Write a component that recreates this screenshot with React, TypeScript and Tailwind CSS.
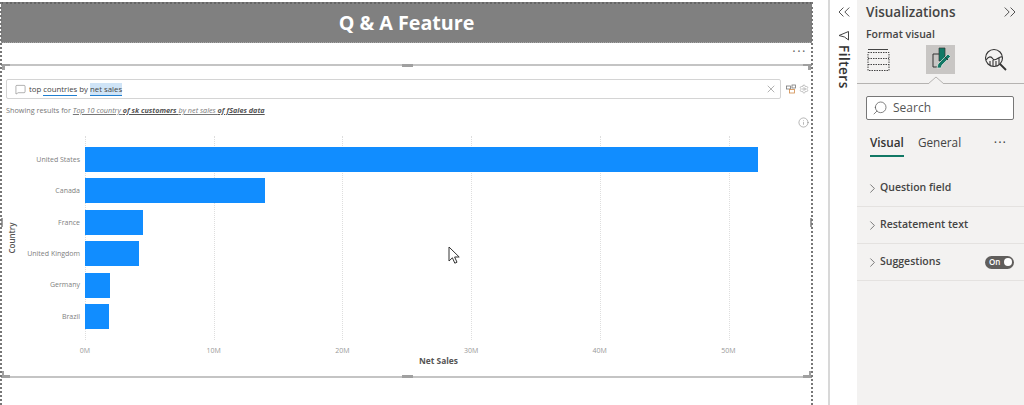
import React from "react";
import { ChevronRight, ChevronsLeft, ChevronsRight, Search, X, MessageSquare, Settings, Info } from "lucide-react";

const bars = [
  { name: "United States", w: 673 },
  { name: "Canada", w: 180 },
  { name: "France", w: 58 },
  { name: "United Kingdom", w: 54 },
  { name: "Germany", w: 25 },
  { name: "Brazil", w: 24 },
];
const ticks = ["0M", "10M", "20M", "30M", "40M", "50M"];

function Handle({ className }: { className: string }) {
  return <div className={"absolute bg-[#a0a0a0] " + className} />;
}

export default function App() {
  return (
    <div className="flex h-[405px] w-[1024px] overflow-hidden bg-white font-['Open_Sans','Noto_Sans',sans-serif]">
      <div className="relative w-[828px] shrink-0 bg-white">
        <div className="mx-[1px] mt-[2px] h-[41px] w-[811px] border-t-2 border-dotted border-[#666] bg-[#808080] border-b border-b-[#a8a8a8]">
          <h1 className="text-center text-[19.7px] leading-[38px] font-bold text-white">Q &amp; A Feature</h1>
        </div>
        <div className="flex h-[21px] w-[812px] items-start justify-end pr-[5px] pt-[4px] text-[13px] leading-[8px] tracking-[1.5px] text-[#666]">···</div>
        <div className="relative mx-[1px] h-[314px] w-[811px] border-y-2 border-[#c4c4c4]">
          <Handle className="left-0 top-[-2px] h-[2px] w-[9px]" />
          <Handle className="left-[1px] top-[-2px] h-[6px] w-[3px]" />
          <Handle className="left-[401px] top-[-2px] h-[3px] w-[11px]" />
          <Handle className="right-0 top-[-2px] h-[2px] w-[9px]" />
          <Handle className="right-[1px] top-[-2px] h-[6px] w-[3px]" />
          <Handle className="left-0 bottom-[-2px] h-[3px] w-[9px]" />
          <Handle className="left-[1px] bottom-[-2px] h-[7px] w-[2px]" />
          <Handle className="left-[401px] bottom-[-2px] h-[3px] w-[11px]" />
          <Handle className="right-0 bottom-[-2px] h-[3px] w-[9px]" />
          <Handle className="right-[1px] bottom-[-2px] h-[7px] w-[2px]" />
          <Handle className="left-0 top-[152px] h-[9px] w-[2px]" />
          <Handle className="right-0 top-[152px] h-[9px] w-[2px]" />
          <div className="flex items-center pl-[5px] pt-[13px]">
            <div className="flex h-[20px] w-[775px] items-center rounded-[2px] border border-[#d4d4d4] pl-[8px] pr-[3px] text-[7.8px] leading-[12px] text-[#444]">
              <MessageSquare size={11} strokeWidth={1} className="mr-[3px] text-[#555]" />
              <span className="border-b border-transparent">top&nbsp;</span>
              <span className="border-b border-[#1f7fd0]">countries</span>
              <span className="border-b border-transparent">&nbsp;by&nbsp;</span>
              <span className="border-b border-[#1f7fd0] bg-[#cfe4f7]">net sales</span>
              <X size={12} strokeWidth={1} className="ml-auto text-[#666]" />
            </div>
            <svg width="10" height="10" viewBox="0 0 10 10" className="ml-[5px] text-[#777]" fill="none" stroke="currentColor" strokeWidth="0.8">
              <rect x="0.5" y="2" width="4" height="3" />
              <rect x="3.5" y="5.5" width="5" height="3.5" stroke="#d08b4a" />
              <rect x="6" y="1" width="3.5" height="3" />
            </svg>
            <Settings size={10} strokeWidth={1} className="ml-[3px] text-[#777]" />
          </div>
          <p className="pl-[5px] pt-[6px] text-[7.25px] leading-[11px] text-[#777]">
            Showing results for <span className="italic underline">Top 10 country </span>
            <span className="font-bold italic text-[#555] underline">of sk customers </span>
            <span className="italic underline">by net sales </span>
            <span className="font-bold italic text-[#555] underline">of fSales data</span>
          </p>
          <div className="flex justify-end pr-[3px] pt-[1px]">
            <Info size={11} strokeWidth={1} className="text-[#666]" />
          </div>
          <div className="relative mt-[8px] flex">
            <div className="flex w-[20px] items-center justify-center">
              <span className="-rotate-90 text-[8px] font-semibold text-[#555]">Country</span>
            </div>
            <div className="relative h-[204px] grow">
              <div className="absolute inset-0 left-[64px]">
                {ticks.map((t, i) => (
                  <div key={t} className="absolute top-0 h-full border-l border-dotted border-[#dedede]" style={{ left: i * 128.7 }} />
                ))}
              </div>
              <div className="relative flex flex-col gap-[6.4px] pt-[11px]">
                {bars.map((b) => (
                  <div key={b.name} className="flex h-[25px] items-center">
                    <span className="w-[59px] shrink-0 whitespace-nowrap pt-[1px] text-right text-[7px] text-[#808080]">{b.name}</span>
                    <div className="ml-[5px] h-full bg-[#118dff]" style={{ width: b.w }} />
                  </div>
                ))}
              </div>
            </div>
          </div>
          <div className="relative flex h-[16px] pl-[84px] pt-[6px] text-[7px] leading-[10px] text-[#999]">
            {ticks.map((t) => (
              <div key={t} className="w-[128.7px] shrink-0 whitespace-nowrap">
                <span className="inline-flex w-0 justify-center">{t}</span>
              </div>
            ))}
          </div>
          <div className="pl-[418px] text-[8.4px] leading-[10px] font-bold text-[#555]">Net Sales</div>
          <svg width="12" height="20" viewBox="0 0 12 20" className="absolute left-[447px] top-[180px]" fill="white" stroke="#333" strokeWidth="1">
            <path d="M1 1v14l3.4-3.2 2.4 5.4 2.2-1-2.4-5.2h4.6z" />
          </svg>
        </div>
        <div className="absolute left-0 top-[2px] h-[403px] border-l-2 border-dotted border-[#777]" />
        <div className="absolute left-[811px] top-[2px] h-[403px] border-l-2 border-dotted border-[#777]" />
      </div>

      <div className="w-[2px] shrink-0 bg-[#d8d8d8]" />

      <div className="flex w-[27px] shrink-0 flex-col items-center bg-white pt-[2px] text-[#444]">
        <ChevronsLeft size={20} strokeWidth={1.1} />
        <svg width="12" height="12" viewBox="0 0 12 12" className="mt-[8px]" fill="none" stroke="#444" strokeWidth="1">
          <path d="M1 5.5 10.5 1.5v8.5L6.5 7 1 5.5Z" />
        </svg>
        <span className="mt-[3px] text-[13.5px] leading-[16px] font-semibold tracking-[0.5px] text-[#333] [writing-mode:vertical-rl]">Filters</span>
      </div>

      <div className="flex grow flex-col bg-[#f3f2f1]">
        <div className="flex h-[22px] items-center justify-between pl-[9px] pr-[4px] pt-[2px]">
          <span className="text-[13.5px] leading-[20px] font-semibold text-[#444]">Visualizations</span>
          <ChevronsRight size={20} strokeWidth={1.1} className="text-[#444]" />
        </div>
        <div className="pl-[9px] pt-[5px] text-[10.5px] leading-[14px] font-semibold text-[#444]">Format visual</div>
        <div className="relative flex h-[43px] items-center border-b border-[#b5b3b1]">
          <svg width="24" height="24" viewBox="0 0 24 24" className="mb-[4px] ml-[10px]" fill="none" stroke="#444" strokeWidth="1">
            <path d="M1 1.5h20" />
            <rect x="1" y="4.5" width="21" height="18" strokeDasharray="1.5 1" />
            <path d="M1 10.5h21M1 16.5h21" strokeDasharray="1.5 1" />
          </svg>
          <div className="mb-[6px] ml-[35px] flex h-[29px] w-[29px] items-center justify-center bg-[#c8c6c4]">
            <svg width="22" height="24" viewBox="0 0 22 24" fill="none">
              <path d="M9 1h6v13H9z" fill="#117865" stroke="#333" strokeWidth="0.7" />
              <path d="M9 7H3v13h4" stroke="#333" />
              <path d="M7 21 8 17 18 7l2.5 2.5L12 18l-1 3z" fill="#117865" stroke="#e8e6e4" strokeWidth="0.7" />
              <path d="m15 10 3 3" stroke="#333" />
            </svg>
          </div>
          <svg width="24" height="24" viewBox="0 0 24 24" className="mb-[4px] ml-[29px]" fill="none" stroke="#333" strokeWidth="1.1">
            <circle cx="10" cy="10" r="8.5" />
            <path d="M2 12c3-4 5-4 7-1s6-3 9-2M6 17v-4M9 18v-6M12 18v-5M15 16v-6" />
            <path d="m16 16 6 6" strokeWidth="1.8" />
          </svg>
          <svg width="18" height="8" viewBox="0 0 18 8" className="absolute bottom-[-1px] left-[70px]">
            <path d="M1 8 9 1l8 7" fill="#f3f2f1" stroke="#b5b3b1" />
          </svg>
        </div>
        <div className="ml-[9px] mr-[10px] mt-[12px] flex h-[24px] items-center rounded-[2px] border border-[#777] bg-white pl-[5px] text-[12px] text-[#555]">
          <Search size={16} strokeWidth={1.1} className="-scale-x-100" />
          <span className="ml-[5px]">Search</span>
        </div>
        <div className="mt-[14px] flex h-[28px] items-start pl-[13px] pr-[17px] text-[11.75px] leading-[16px] text-[#444]">
          <span className="h-[23px] border-b-2 border-[#117865] font-semibold text-[#333]">Visual</span>
          <span className="ml-[14px]">General</span>
          <span className="ml-auto text-[13px] tracking-[1px]">···</span>
        </div>
        {["Question field", "Restatement text", "Suggestions"].map((s, i) => (
          <div key={s} className={"flex h-[37px] items-center border-b border-[#e4e2e0] pl-[9px] pr-[10px] text-[10.5px] font-semibold text-[#444] " + (i === 0 ? "mt-[8px]" : "")}>
            <ChevronRight size={15} strokeWidth={1.1} className="-ml-[1px]" />
            <span>{s}</span>
            {i === 2 && (
              <div className="ml-auto flex h-[13px] w-[29px] items-center justify-between rounded-full bg-[#605e5c] pl-[4px] pr-[2px] text-[8px] text-white">
                On
                <span className="h-[8px] w-[8px] rounded-full bg-white" />
              </div>
            )}
          </div>
        ))}
      </div>
    </div>
  );
}
